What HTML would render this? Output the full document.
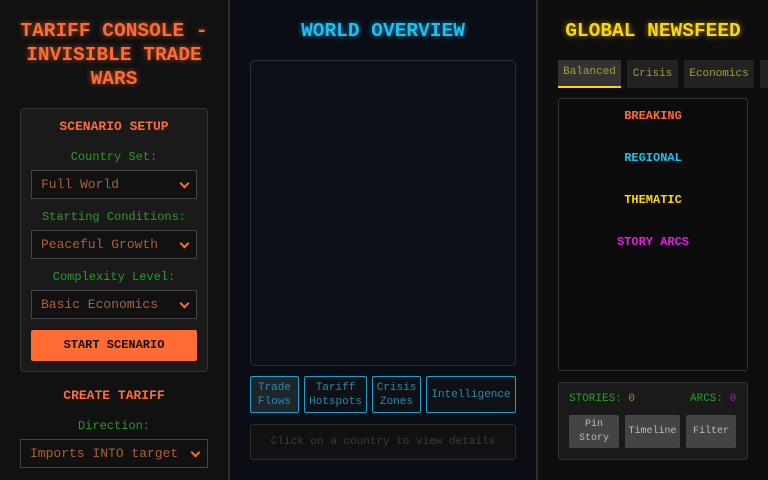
<!DOCTYPE html><html><head><style>
*{box-sizing:border-box;margin:0;padding:0}
body{width:768px;height:480px;overflow:hidden;background:#0a0a0a;font-family:"Liberation Mono",monospace;position:relative}
.a{position:absolute}
.c{text-align:center}
.lp{left:0;top:0;width:228px;height:480px;background:#111}
.mp{left:230px;top:0;width:306px;height:480px;background:#0a0d14}
.rp{left:538px;top:0;width:230px;height:480px;background:#0e0e0e}
.dv{top:0;width:2px;height:480px;background:#2e2e2e}
.t{font-weight:bold;font-size:19.5px;line-height:24px}
.lbl{font-size:12px;color:#2a9a2a;width:100%;text-align:center}
.sel{background:#111;border:1px solid #444;color:#a8603c;font-size:13px;padding-left:9px;line-height:27px}
.sel:after{content:"";position:absolute;right:8px;top:9px;width:5px;height:5px;border-right:2px solid #ff6b35;border-bottom:2px solid #ff6b35;transform:rotate(45deg)}
.mb{top:376px;height:37px;border:1px solid #1e9fd0;border-radius:2px;color:#2a8aaa;font-size:11px;line-height:14px;display:flex;align-items:center;justify-content:center;text-align:center;background:#0e1116}
.tab{top:60px;height:28px;background:#222;color:#a89a3a;font-size:11px;line-height:28px;text-align:center}
.h{left:558px;width:190px;text-align:center;font-weight:bold;font-size:12px}
.rb{top:415px;height:33px;background:#444;color:#bbb;font-size:10px;border-radius:2px;display:flex;align-items:center;justify-content:center;text-align:center;line-height:14px}
</style></head><body>
<div class="a lp"></div><div class="a dv" style="left:228px"></div>
<div class="a mp"></div><div class="a dv" style="left:536px"></div>
<div class="a rp"></div>

<div class="a t c" style="left:0;top:19px;width:228px;color:#ff6b35;text-shadow:0 0 6px rgba(255,107,53,.7)">TARIFF CONSOLE -<br>INVISIBLE TRADE<br>WARS</div>
<div class="a" style="left:20px;top:108px;width:188px;height:264px;background:#1a1a1a;border:1px solid #333;border-radius:3px"></div>
<div class="a c" style="left:20px;top:119px;width:188px;font-weight:bold;font-size:13px;color:#ff6b35">SCENARIO SETUP</div>
<div class="a lbl" style="left:0;width:228px;top:150px">Country Set:</div>
<div class="a sel" style="left:31px;top:170px;width:166px;height:29px">Full World</div>
<div class="a lbl" style="left:0;width:228px;top:210px">Starting Conditions:</div>
<div class="a sel" style="left:31px;top:230px;width:166px;height:29px">Peaceful Growth</div>
<div class="a lbl" style="left:0;width:228px;top:270px">Complexity Level:</div>
<div class="a sel" style="left:31px;top:290px;width:166px;height:29px">Basic Economics</div>
<div class="a c" style="left:31px;top:330px;width:166px;height:31px;background:#ff6b35;border-radius:2px;color:#111;font-weight:bold;font-size:12px;line-height:31px">START SCENARIO</div>
<div class="a c" style="left:0;top:388px;width:228px;font-weight:bold;font-size:13px;color:#ff6b35">CREATE TARIFF</div>
<div class="a lbl" style="left:0;width:228px;top:419px">Direction:</div>
<div class="a sel" style="left:20px;top:439px;width:188px;height:29px">Imports INTO target</div>

<div class="a t c" style="left:230px;top:19px;width:306px;color:#1ec0f0;text-shadow:0 0 6px rgba(0,191,255,.7)">WORLD OVERVIEW</div>
<div class="a" style="left:250px;top:60px;width:266px;height:306px;background:#0c1018;border:1px solid #2a2e36;border-radius:5px"></div>
<div class="a mb" style="left:250px;width:49px;background:#1e262c">Trade<br>Flows</div>
<div class="a mb" style="left:304px;width:63px">Tariff<br>Hotspots</div>
<div class="a mb" style="left:372px;width:49px">Crisis<br>Zones</div>
<div class="a mb" style="left:426px;width:90px">Intelligence</div>
<div class="a c" style="left:250px;top:424px;width:266px;height:36px;background:#111;border:1px solid #2e2e2e;border-radius:3px;color:#3c3c3c;font-size:11px;line-height:34px">Click on a country to view details</div>

<div class="a t c" style="left:538px;top:19px;width:230px;color:#ffd700;text-shadow:0 0 6px rgba(255,215,0,.6)">GLOBAL NEWSFEED</div>
<div class="a tab" style="left:558px;width:63px;background:#333;border-bottom:2px solid #ffd700;line-height:25px">Balanced</div>
<div class="a tab" style="left:627px;width:51px">Crisis</div>
<div class="a tab" style="left:684px;width:70px">Economics</div>
<div class="a tab" style="left:760px;width:30px"></div>
<div class="a" style="left:558px;top:98px;width:190px;height:273px;background:#0c0c0c;border:1px solid #333;border-radius:3px"></div>
<div class="a h" style="top:109px;color:#ff6b35">BREAKING</div>
<div class="a h" style="top:151px;color:#1ec0f0">REGIONAL</div>
<div class="a h" style="top:193px;color:#ffd700">THEMATIC</div>
<div class="a h" style="top:235px;color:#e020e0">STORY ARCS</div>
<div class="a" style="left:558px;top:382px;width:190px;height:78px;background:#1a1a1a;border:1px solid #333;border-radius:3px"></div>
<div class="a" style="left:569px;top:393px;font-size:11px;color:#2a9a2a">STORIES: <span style="color:#aa8a20">0</span></div>
<div class="a" style="left:690px;top:393px;font-size:11px;color:#2a9a2a">ARCS: <span style="color:#a020a0">0</span></div>
<div class="a rb" style="left:569px;width:50px">Pin<br>Story</div>
<div class="a rb" style="left:625px;width:55px">Timeline</div>
<div class="a rb" style="left:686px;width:50px">Filter</div>
</body></html>
